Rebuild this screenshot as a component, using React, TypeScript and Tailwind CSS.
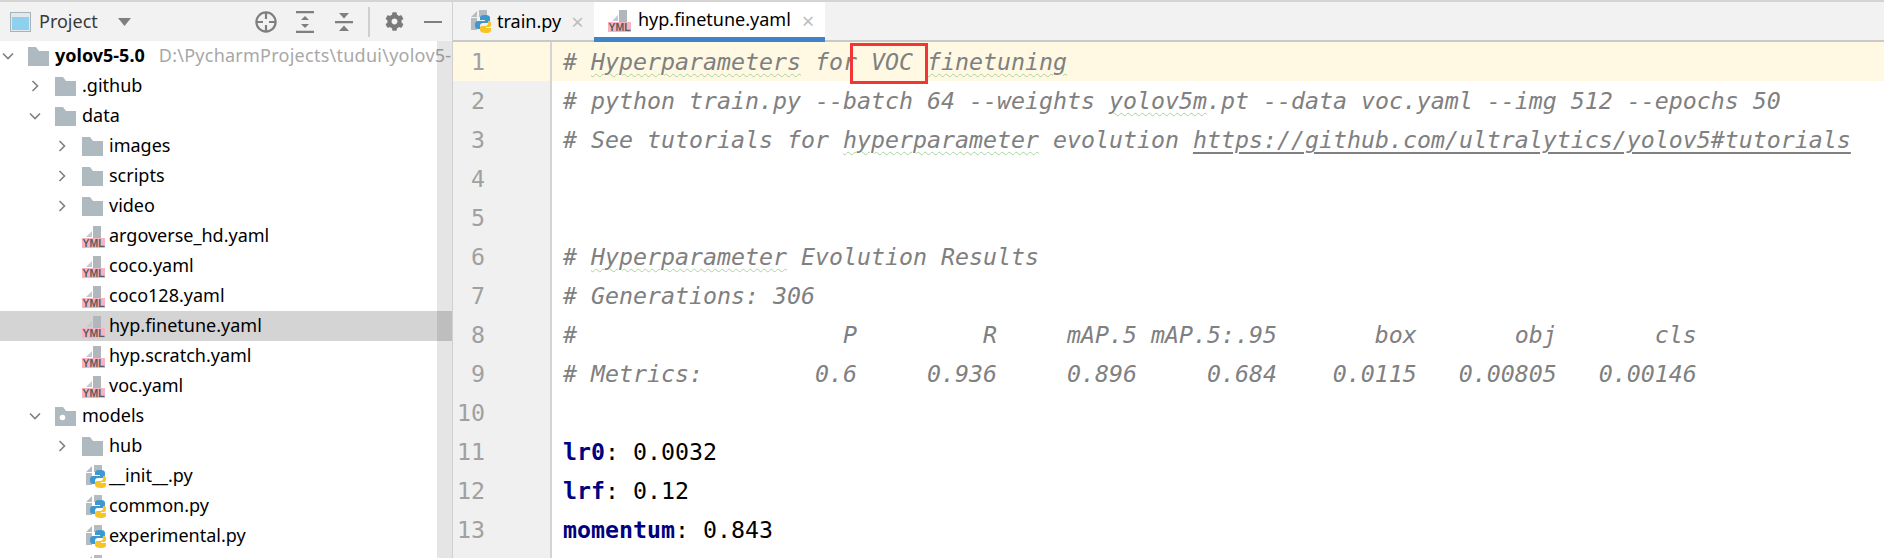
import React from 'react';
import { FaCog } from 'react-icons/fa';

type TreeRow = {
  label: string;
  depth: 0 | 1 | 2;
  icon: 'folder' | 'package' | 'yml' | 'py';
  arrow?: 'open' | 'closed';
  selected?: boolean;
  hint?: string;
};

const treeRows: TreeRow[] = [
  { label: 'yolov5-5.0', depth: 0, icon: 'folder', arrow: 'open', hint: 'D:\\PycharmProjects\\tudui\\yolov5-' },
  { label: '.github', depth: 1, icon: 'folder', arrow: 'closed' },
  { label: 'data', depth: 1, icon: 'folder', arrow: 'open' },
  { label: 'images', depth: 2, icon: 'folder', arrow: 'closed' },
  { label: 'scripts', depth: 2, icon: 'folder', arrow: 'closed' },
  { label: 'video', depth: 2, icon: 'folder', arrow: 'closed' },
  { label: 'argoverse_hd.yaml', depth: 2, icon: 'yml' },
  { label: 'coco.yaml', depth: 2, icon: 'yml' },
  { label: 'coco128.yaml', depth: 2, icon: 'yml' },
  { label: 'hyp.finetune.yaml', depth: 2, icon: 'yml', selected: true },
  { label: 'hyp.scratch.yaml', depth: 2, icon: 'yml' },
  { label: 'voc.yaml', depth: 2, icon: 'yml' },
  { label: 'models', depth: 1, icon: 'package', arrow: 'open' },
  { label: 'hub', depth: 2, icon: 'folder', arrow: 'closed' },
  { label: '__init__.py', depth: 2, icon: 'py' },
  { label: 'common.py', depth: 2, icon: 'py' },
  { label: 'experimental.py', depth: 2, icon: 'py' },
  { label: '', depth: 2, icon: 'py' },
];

const indents = ['pl-0', 'pl-[27px]', 'pl-[54px]'];

const Folder = ({ dot }: { dot?: boolean }) => (
  <svg width="21" height="20" viewBox="0 0 21 20" className="shrink-0">
    <path d="M0 1h8l3 4h10v15H0z" fill="#afb9c0" />
    {dot && <circle cx="7.5" cy="11.5" r="2.8" fill="#fff" />}
  </svg>
);

const FileBack = () => (
  <>
    <path d="M11 1h8v12H11z" fill="#afb7bd" />
    <path d="M4 12l6-6v6z" fill="#c3c9ce" />
  </>
);

const YmlIcon = () => (
  <svg width="24" height="26" viewBox="0 -2 24 26" className="shrink-0">
    <FileBack />
    <rect x="0" y="13" width="23" height="10" fill="#f8b3c0" />
    <text x="11.5" y="22" textAnchor="middle" fontSize="10.5" fontWeight="700" fill="#5c5c5c" fontFamily="Liberation Sans, sans-serif">YML</text>
  </svg>
);

const PyIcon = () => (
  <svg width="21" height="24" viewBox="0 0 21 24" className="shrink-0">
    <path d="M9 1h8v7H9zM1 8l6-6v6zM1 9h6v12H1z" fill="#b4bcc2" />
    <path d="M15 6c-4 0-5 1-5 3v2h5v1H8c-2 0-3 1-3 4s1 4 3 4h2v-3c0-2 1-3 3-3h4c2 0 3-1 3-3V9c0-2-1-3-5-3z" fill="#3f97cf" />
    <path d="M16 24c4 0 5-1 5-3v-2h-5v-1h3c2 0 2-2 2-4 0-1-1-2-2-2h-1v2c0 2-1 3-3 3h-3c-2 0-2 1-2 2v2c0 2 2 3 6 3z" fill="#f6c425" />
  </svg>
);

const Chevron = ({ open }: { open: boolean }) => (
  <svg width="12" height="12" viewBox="0 0 12 12" fill="none" stroke="#7f7f7f" strokeWidth="1.6">
    <path d={open ? 'M1 3.5l5 5 5-5' : 'M3.5 1l5 5-5 5'} />
  </svg>
);

const Sidebar = () => (
  <div className="w-[453px] shrink-0 flex flex-col border-r border-[#d0d0d0] bg-white">
    <div className="h-[39px] flex items-center bg-[#f2f2f2] text-[#555]">
      <svg width="21" height="20" viewBox="0 0 21 20" className="ml-[10px]">
        <rect x="0.5" y="0.5" width="20" height="19" fill="#e4e8ea" stroke="#a9b3ba" />
        <rect x="2" y="5" width="17" height="13" fill="#8fd0ef" />
      </svg>
      <span className="ml-[8px] text-[18px] text-[#3a3a3a]">Project</span>
      <svg width="13" height="8" viewBox="0 0 13 8" className="ml-[20px]"><path d="M0 0h13L6.5 8z" fill="#7f7f7f" /></svg>
      <div className="flex-1" />
      <svg width="22" height="22" viewBox="0 0 22 22" fill="none" stroke="#7f7f7f" strokeWidth="2.2">
        <circle cx="11" cy="11" r="9.6" />
        <path d="M11 1v7M11 14v7M1 11h7M14 11h7" />
      </svg>
      <svg width="18" height="22" viewBox="0 0 18 22" className="ml-[19px]" fill="#7f7f7f">
        <path d="M0 0h18v2.2H0zM0 19.8h18V22H0zM9 5l4 4H5zM9 17l-4-4h8z" />
      </svg>
      <svg width="18" height="20" viewBox="0 0 18 20" className="ml-[21px]" fill="#7f7f7f">
        <path d="M0 9h18v2.2H0zM4 1h10l-5 5.5zM9 13.5l5 5.5H4z" />
      </svg>
      <div className="w-[2px] h-[30px] bg-[#cfcfcf] ml-[15px]" />
      <FaCog size={19} color="#7a7a7a" className="ml-[15px]" />
      <div className="w-[18px] h-[2px] bg-[#7f7f7f] ml-[20px] mr-[10px]" />
    </div>
    <div className="relative flex-1 overflow-hidden font-['Noto_Sans',sans-serif] text-[18px] leading-[30px] text-black">
      {treeRows.map((row, i) => (
        <div key={i} className={`flex items-center h-[30px] whitespace-nowrap ${indents[row.depth]} ${row.selected ? 'bg-[#d4d4d4]' : ''}`}>
          <div className="w-[28px] shrink-0 flex justify-start pl-[2px]">
            {row.arrow && <Chevron open={row.arrow === 'open'} />}
          </div>
          <div className="w-[27px] shrink-0 flex">
            {row.icon === 'folder' && <Folder />}
            {row.icon === 'package' && <Folder dot />}
            {row.icon === 'yml' && <YmlIcon />}
            {row.icon === 'py' && <div className="pl-[3px]"><PyIcon /></div>}
          </div>
          <span className={`pb-[2px] ${row.depth === 0 ? 'font-bold' : ''}`}>{row.label}</span>
          {row.hint && <span className="ml-[14px] pb-[2px] tracking-[0.25px] text-[#a8a8a8]">{row.hint}</span>}
        </div>
      ))}
      <div className="absolute right-0 top-0 bottom-0 w-[15px] bg-black/10" />
    </div>
  </div>
);

const Tabs = () => (
  <div className="h-[40px] shrink-0 flex bg-[#f2f2f2] border-b-2 border-[#c9c9c9] font-['Noto_Sans',sans-serif] text-[18px] text-black">
    <div className="w-[141px] flex items-center pl-[17px]">
      <PyIcon />
      <span className="ml-[6px]">train.py</span>
      <span className="ml-[10px] text-[22px] leading-none text-[#bdbdbd]">×</span>
    </div>
    <div className="w-[231px] -mb-[2px] flex items-center pl-[14px] bg-white border-b-[5px] border-[#4083c9]">
      <YmlIcon />
      <span className="ml-[6px]">hyp.finetune.yaml</span>
      <span className="ml-[11px] text-[22px] leading-none text-[#bdbdbd]">×</span>
    </div>
  </div>
);

const Squiggle = ({ children }: { children: React.ReactNode }) => (
  <span className="underline decoration-wavy decoration-1 decoration-[#a8d5a0] underline-offset-[3px]">{children}</span>
);

const codeLines: React.ReactNode[] = [
  <># <Squiggle>Hyperparameters</Squiggle> for VOC <Squiggle>finetuning</Squiggle></>,
  <># python train.py --batch 64 --weights <Squiggle>yolov5m</Squiggle>.pt --data voc.yaml --img 512 --epochs 50</>,
  <># See tutorials for <Squiggle>hyperparameter</Squiggle> evolution <span className="underline underline-offset-[4px]">https://github.com/ultralytics/yolov5#tutorials</span></>,
  null,
  null,
  <># <Squiggle>Hyperparameter</Squiggle> Evolution Results</>,
  <># Generations: 306</>,
  '#                   P         R     mAP.5 mAP.5:.95       box       obj       cls',
  '# Metrics:        0.6     0.936     0.896     0.684    0.0115   0.00805   0.00146',
  null,
];

const settings = [
  { line: 11, key: 'lr0', value: '0.0032' },
  { line: 12, key: 'lrf', value: '0.12' },
  { line: 13, key: 'momentum', value: '0.843' },
];

const CodeRow = ({ n, active, children }: { n: number; active?: boolean; children?: React.ReactNode }) => (
  <div className={`flex h-[39px] shrink-0 ${active ? 'bg-[#fff9e3]' : ''}`}>
    <div className={`w-[99px] shrink-0 pr-[65px] text-right not-italic text-[#a0a0a0] border-r-2 border-[#d4d4d4] ${active ? '' : 'bg-[#f0f0f0]'}`}>{n}</div>
    <div className="pl-[11px] whitespace-pre">{children}</div>
  </div>
);

const Editor = () => (
  <div className="relative flex-1 min-w-0 flex flex-col bg-white">
    <Tabs />
    <div className="flex-1 flex flex-col overflow-hidden font-['DejaVu_Sans_Mono',monospace] text-[23.25px] leading-[39px]">
      {codeLines.map((line, i) => (
        <CodeRow key={i} n={i + 1} active={i === 0}>
          <span className="italic text-[#808080]">{line}</span>
        </CodeRow>
      ))}
      {settings.map((s) => (
        <CodeRow key={s.line} n={s.line}>
          <span className="font-bold text-[#000080]">{s.key}</span>
          <span className="text-black">: {s.value}</span>
        </CodeRow>
      ))}
      <div className="flex-1 w-[99px] bg-[#f0f0f0] border-r-2 border-[#d4d4d4]" />
    </div>
    <div className="absolute left-[397px] top-[41px] w-[78px] h-[41px] border-[3px] border-[#f33535]" />
  </div>
);

export default function App() {
  return (
    <div className="h-[558px] w-[1884px] overflow-hidden flex flex-col bg-white font-['Noto_Sans',sans-serif]">
      <div className="h-[2px] shrink-0 bg-[#d4d4d4]" />
      <div className="flex-1 min-h-0 flex">
        <Sidebar />
        <Editor />
      </div>
    </div>
  );
}
